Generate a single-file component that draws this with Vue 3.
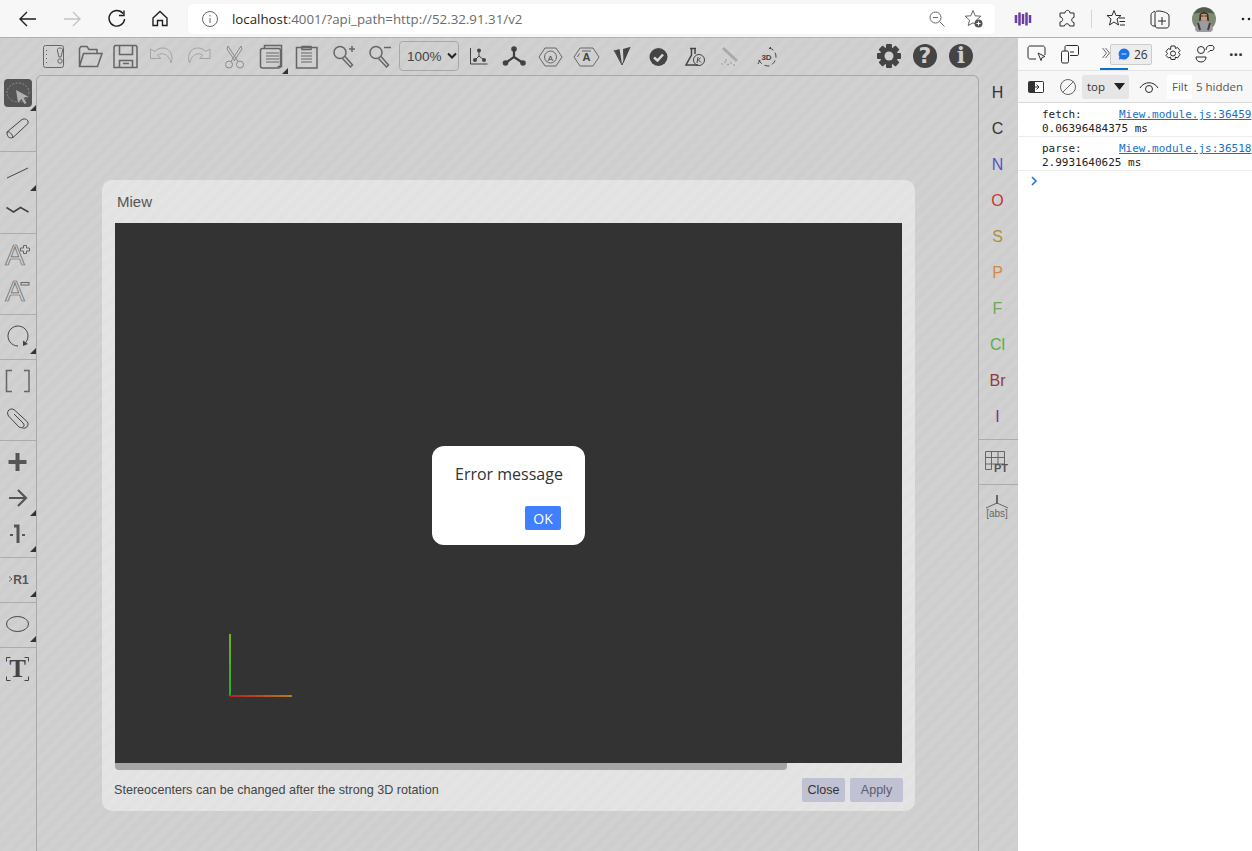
<template>
  <div class="page">
    <!-- browser bar -->
    <header class="browser">
      <div class="nav">
        <span class="nav-btn"><svg width="44" height="38" viewBox="0 0 44 38"><path class="b-line" d="M30 19H14M21 12l-7 7 7 7" /></svg></span>
        <span class="nav-btn"><svg width="44" height="38" viewBox="0 0 44 38"><path class="b-line off" d="M14 19h16M23 12l7 7-7 7" /></svg></span>
        <span class="nav-btn"><svg width="44" height="38" viewBox="0 0 44 38"><path class="b-line" d="M29 13.500a7.800 7.800 0 1 0 1.600 5.500M30 10.500v5h-5" /></svg></span>
        <span class="nav-btn"><svg width="44" height="38" viewBox="0 0 44 38"><path class="b-line" d="M15 18l7-6.500 7 6.500v7.500h-4.500v-5h-5v5H15z" /></svg></span>
      </div>
      <div class="url">
        <svg class="url-info" width="18" height="18" viewBox="0 0 18 18">
          <circle cx="9" cy="9" r="7.500" class="b-thin" />
          <path class="b-thin" d="M9 8v5M9 5v1.500" />
        </svg>
        <span class="url-text"><span class="host">localhost</span>:4001/?api_path=http://52.32.91.31/v2</span>
        <svg class="url-zoom" width="18" height="18" viewBox="0 0 18 18">
          <circle cx="7.500" cy="7.500" r="5.500" class="b-thin" />
          <path class="b-thin" d="M5 7.500h5M11.500 11.500l5 5" />
        </svg>
        <svg class="url-star" width="20" height="20" viewBox="0 0 20 20">
          <path class="b-thin" d="M9 1.500l2.200 5.300 5.600.4-4.300 3.700 1.300 5.500L9 13.800l-4.800 2.800 1.300-5.500L1.200 7.200l5.600-.4z" />
          <circle cx="14.500" cy="14.500" r="4" fill="#555" />
          <path d="M12.500 14.500h4M14.500 12.500v4" stroke="#fff" stroke-width="1" />
        </svg>
      </div>
      <div class="ext">
        <span class="ext-btn"><svg width="20" height="20" viewBox="0 0 20 20"><path d="M3 6v8M6.500 3.500v13M10 5v10M13.500 3.500v13M17 6v8" stroke="#6a3f9e" stroke-width="2.500" /></svg></span>
        <span class="ext-btn"><svg width="20" height="20" viewBox="0 0 20 20"><path class="b-thin dark" d="M8 4c0-3.500 5-3.500 5 0h4v4.500c-3 0-3 5 0 5V17h-4.500c0-3-5-3-5 0H3v-4c3.500 0 3.500-5 0-5V4z" /></svg></span>
        <span class="ext-sep"></span>
        <span class="ext-btn"><svg width="20" height="20" viewBox="0 0 20 20"><path class="b-thin dark" d="M8 1.500l2 5H15l-4 3.500 1.500 6-4.500-3-4.500 3L5 10 1 6.500h5zM13 9h6M13.500 12.500h5.500M14 16h5" /></svg></span>
        <span class="ext-btn"><svg width="22" height="22" viewBox="0 0 22 22"><path class="b-thin dark" d="M6 3L3.500 4.500C2 5.500 2 6 2 8v7c0 2 1 3 3 3h2" /><path class="b-thin dark" d="M9 3c-2 0-3 1-3 3v11c0 2 1 3 3 3h8c2 0 3-1 3-3V8c0-3-6-5-11-5z" /><path class="b-thin dark" d="M13 9v8M9 13h8" /></svg></span>
        <span class="ext-btn">
          <svg width="26" height="26" viewBox="0 0 26 26">
            <circle cx="13" cy="13" r="12" fill="#7f8a72" />
            <path d="M3 8a11 11 0 0 1 20 0c-5-2-15-2-20 0z" fill="#4f5a4a" />
            <path d="M4 24c1-7 4-9 9-9s8 2 9 9a12 12 0 0 1-18 0z" fill="#9a9ca4" />
            <path d="M7 17l2 7M19 17l-2 7" stroke="#4a3540" stroke-width="2" />
            <circle cx="13" cy="10.500" r="4.200" fill="#c89a80" />
            <path d="M8.500 9c1-4 8-4 9 0l.5 6-2-1V8.500c-2-1-4-1-6 0V14l-2 1z" fill="#3d3028" />
            <path d="M10 10h2.500M13.500 10H16" stroke="#332" stroke-width="1" />
          </svg>
        </span>
        <span class="ext-btn"><svg width="44" height="38" viewBox="0 0 44 38"><circle cx="17" cy="19" r="1.300" fill="#222" /><circle cx="23" cy="19" r="1.300" fill="#222" /></svg></span>
      </div>
    </header>

    <main class="main">
      <!-- ketcher editor -->
      <section class="app">
        <div class="top-bar">
          <div class="tools">
            <span class="tool">
              <svg viewBox="0 0 36 36"><rect x="7.500" y="7.500" width="20" height="22" rx="2" class="s" /><path class="s" d="M10.500 12v1M10.500 16v1M10.500 20v1M10.500 24v1" /><path d="M24 10c2 0 3 1 2.500 3L25 19h-2l-1.500-6c-.5-2 .5-3 2.500-3z" class="s" /><circle cx="24" cy="23" r="2.200" class="s" /></svg>
            </span>
            <span class="tool">
              <svg viewBox="0 0 36 36"><path class="s w" d="M7.500 28.500v-18l1.500-2h6l2 3h8v4M7.500 28.500l4-13h18.500l-4.500 13z" /></svg>
            </span>
            <span class="tool">
              <svg viewBox="0 0 36 36"><path class="s w" d="M8.500 7.500h21l1 1.500v20.500h-23V9z" transform="translate(-1.500 0)" /><path class="s w" d="M11.500 7.500v9h13v-9M11.500 29.500v-7h13v7M15 25.500h6" /></svg>
            </span>
            <span class="tool">
              <svg viewBox="0 0 36 36"><path class="s l" d="M6.500 11v9.500H17l-3.500-3c4.500-3.500 11-2 13.500 7.500 3-7-1-15-8-15-3 0-6 1-8 3.500z" /></svg>
            </span>
            <span class="tool">
              <svg viewBox="0 0 36 36"><path class="s l" d="M30 11v9.500H19.500l3.500-3c-4.500-3.500-11-2-13.500 7.500-3-7 1-15 8-15 3 0 6 1 8 3.500z" /></svg>
            </span>
            <span class="tool">
              <svg viewBox="0 0 36 36"><circle cx="13" cy="26.500" r="3.500" class="s m" /><circle cx="24" cy="26.500" r="3.500" class="s m" /><path class="s m" d="M15 23.500L25 8l1 3-8 12M22 23.500L12 8l-1 3 8 12" /></svg>
            </span>
            <span class="tool menu">
              <svg viewBox="0 0 36 36"><path class="s w" d="M12.500 10.500V7.500h17v21h-4" /><rect x="8.500" y="10.500" width="20" height="19.500" rx="2" class="s w" fill="#cfcfcf" /><path class="s" d="M14 15h13M14 18h13M14 21h13M14 24h13" /></svg>
            </span>
            <span class="tool">
              <svg viewBox="0 0 36 36"><path class="s w" d="M8.500 9.500h20.500v20.500H8.500zM14 8.500h9v3h-9z" /><path class="s" d="M13 15h11M13 18h11M13 21h11M13 24h11" /></svg>
            </span>
            <span class="tool zoom">
              <svg viewBox="0 0 36 36"><circle cx="15" cy="14.500" r="6" class="s w" /><path class="s w" d="M20 18.500l7.500 8.500-2 2-8-8.500" /><path class="s w" d="M24 11h6M27 8v6" /></svg>
            </span>
            <span class="tool zoom">
              <svg viewBox="0 0 36 36"><circle cx="15" cy="14.500" r="6" class="s w" /><path class="s w" d="M20 18.500l7.500 8.500-2 2-8-8.500" /><path class="s w" d="M23 9.500h7" /></svg>
            </span>
          </div>
          <div class="zoom-select">
            <span>100%</span>
            <svg width="10" height="8" viewBox="0 0 10 8"><path d="M1 1.500l4 4 4-4" fill="none" stroke="#222" stroke-width="2" /></svg>
          </div>
          <div class="tools">
            <span class="tool">
              <svg viewBox="0 0 36 36"><path class="s k" stroke-width="1.500" d="M10.500 10v16h17" /><circle cx="19" cy="12.500" r="2" class="f" /><circle cx="15" cy="22" r="2" class="f" /><circle cx="24" cy="22" r="2" class="f" /><path class="s k" d="M19 12.500V18l-4 4M19 18l5 4" /></svg>
            </span>
            <span class="tool">
              <svg viewBox="0 0 36 36"><circle cx="18" cy="11" r="2.800" class="f" /><circle cx="9.500" cy="25" r="2.800" class="f" /><circle cx="27" cy="25" r="2.800" class="f" /><path d="M18 11v8l-8.500 6M18 19l9 6" fill="none" stroke="#3d3d3d" stroke-width="2.200" /></svg>
            </span>
            <span class="tool">
              <svg viewBox="0 0 36 36"><path class="s" d="M7 19l6-9h11l6 9-6 9H13z" /><circle cx="18.500" cy="19" r="6" class="s" /><text x="18.500" y="22.500" class="tiny">A</text></svg>
            </span>
            <span class="tool">
              <svg viewBox="0 0 36 36"><path class="s" d="M6 19l6-9h13l6 9-6 9H12zM11.500 15.500l-2 3.500M14 13h9" /><text x="18.500" y="23" class="tiny big">A</text></svg>
            </span>
            <span class="tool">
              <svg viewBox="0 0 36 36"><path class="f" d="M10.500 12.500l5-1.500 2.500 15zM19 11l7-2-6.500 16z" /><path class="s k" d="M10 12l8 15 8-18" /></svg>
            </span>
            <span class="tool">
              <svg viewBox="0 0 36 36"><circle cx="18.500" cy="19" r="9" class="f" /><path d="M14 19.500l3.500 3 5.500-6" fill="none" stroke="#d8d8d8" stroke-width="2.500" /></svg>
            </span>
            <span class="tool">
              <svg viewBox="0 0 36 36"><path class="s k w" d="M14 10.500h6M15.500 11v6L10 27h12M19 11v5" /><circle cx="23" cy="22" r="5.500" class="s k" /><path class="s k" d="M22 19l-1 6M24.500 19.500l-2 2.500 2.500 2.500" /></svg>
            </span>
            <span class="tool">
              <svg viewBox="0 0 36 36"><path d="M10 11l2-2 14 13-2 2z" fill="#a9a9a9" /><path d="M10 26h.1M13 24h.1M16 26.500h.1M19 25h.1M22 27h.1M14 22h.1" stroke="#8f8f8f" stroke-width="1.500" stroke-linecap="round" /></svg>
            </span>
            <span class="tool">
              <svg viewBox="0 0 36 36"><path class="s k" stroke-dasharray="5 3" d="M21 10c5 1 7 5 7 9s-4 9-8 9-10-4-10-9" /><path class="s k" d="M12 22l-2 4M23 9l-2 2" /><text x="18.500" y="21.500" class="tiny d3">3D</text></svg>
            </span>
          </div>
          <div class="tools help">
            <span class="tool">
              <svg viewBox="0 0 36 36">
                <g fill="#444">
                  <circle cx="18" cy="18" r="9" />
                  <rect x="15" y="6" width="6" height="24" rx="1" />
                  <rect x="15" y="6" width="6" height="24" rx="1" transform="rotate(45 18 18)" />
                  <rect x="15" y="6" width="6" height="24" rx="1" transform="rotate(90 18 18)" />
                  <rect x="15" y="6" width="6" height="24" rx="1" transform="rotate(135 18 18)" />
                </g>
                <circle cx="18" cy="18" r="4.500" fill="#cfcfcf" />
              </svg>
            </span>
            <span class="tool">
              <svg viewBox="0 0 36 36"><circle cx="18" cy="18" r="12" fill="#444" /><text x="18" y="25" class="glyph">?</text></svg>
            </span>
            <span class="tool">
              <svg viewBox="0 0 36 36"><circle cx="18" cy="18" r="12" fill="#444" /><text x="18" y="25" class="glyph serif">i</text></svg>
            </span>
          </div>
        </div>

        <div class="workspace">
          <aside class="left-bar">
            <div class="group">
              <span class="tool menu active">
                <svg viewBox="4 4 28 28"><ellipse cx="18" cy="17.500" rx="11" ry="9.500" fill="none" stroke="#8f8f8f" stroke-dasharray="2 1.500" /><path d="M16 15l12 6.500-4.500 1.500 3 5-2 1-3-5-3.500 3.500z" fill="#b0b0b0" /></svg>
              </span>
              <span class="tool">
                <svg viewBox="0 0 36 36"><path class="s k" d="M7 21L22 8.500c3-1.500 7 0 6 4L13 26.500c-3 1-6 .5-6-5.500zM7 21c2-1 5 1.500 6 5.500" /></svg>
              </span>
            </div>
            <div class="group">
              <span class="tool menu">
                <svg viewBox="0 0 36 36"><path class="s k" d="M7 23l21-10" /></svg>
              </span>
              <span class="tool">
                <svg viewBox="0 0 36 36"><path class="s k w" d="M6.500 16.500l7 4.500 7-4.500 8 4.500" /></svg>
              </span>
            </div>
            <div class="group">
              <span class="tool">
                <svg viewBox="0 0 36 36"><text x="15" y="28" class="atom-text">A</text><path class="s" d="M23.500 8.500h3V11h3v3h-3v2.500h-3V14h-3v-3h3z" /></svg>
              </span>
              <span class="tool">
                <svg viewBox="0 0 36 36"><text x="15" y="28" class="atom-text">A</text><rect x="21" y="9.500" width="8" height="2.500" class="s" /></svg>
              </span>
            </div>
            <div class="group">
              <span class="tool menu">
                <svg viewBox="0 0 36 36"><path class="s k" d="M24 26a10 10 0 1 0-6 2" /><path class="f" d="M23 22.500l5 3.500-5 2z" /></svg>
              </span>
            </div>
            <div class="group">
              <span class="tool">
                <svg viewBox="0 0 36 36"><path class="s w" d="M12 7.500H6.500v21H12M24 7.500h5v21h-5" /></svg>
              </span>
              <span class="tool">
                <svg viewBox="0 0 36 36"><path class="s k" stroke-width="1.800" d="M14 15l9 9c3 3-1 6-4 4L8.500 17c-3-5 2-9 6-6l13 12c2 4-2 7-5 6" /></svg>
              </span>
            </div>
            <div class="group">
              <span class="tool">
                <svg viewBox="0 0 36 36"><path d="M17.500 9v18M8.500 18h18" fill="none" stroke="#555" stroke-width="4" /></svg>
              </span>
              <span class="tool menu">
                <svg viewBox="0 0 36 36"><path d="M9 18h16M18 10l8 8-8 8" fill="none" stroke="#555" stroke-width="2.200" /></svg>
              </span>
              <span class="tool menu">
                <svg viewBox="0 0 36 36"><path d="M14 10h4v17" fill="none" stroke="#555" stroke-width="3" /><path d="M10 19h3M22 19h3" stroke="#555" stroke-width="2" /></svg>
              </span>
            </div>
            <div class="group">
              <span class="tool menu">
                <svg viewBox="0 0 36 36"><path class="s" d="M9 15.500l3 2.500-3 2.500" /><text x="21" y="22.500" class="r1">R1</text></svg>
              </span>
            </div>
            <div class="group">
              <span class="tool menu">
                <svg viewBox="0 0 36 36"><ellipse cx="17.500" cy="18" rx="11" ry="7.500" class="s k" /></svg>
              </span>
            </div>
            <div class="group last">
              <span class="tool">
                <svg viewBox="0 0 36 36"><path class="s k" d="M6.500 10.500v-4h4M24.500 6.500h4v4M6.500 25.500v4h4M24.500 29.500h4v-4" /><text x="17.500" y="26" class="t-glyph">T</text></svg>
              </span>
            </div>
          </aside>

          <div class="canvas-frame"></div>

          <aside class="right-bar">
            <div class="atoms">
              <span v-for="a in atoms" :key="a.label" class="atom" :style="{ color: a.color }">{{ a.label }}</span>
            </div>
            <div class="right-group">
              <span class="tool wide">
                <svg viewBox="0 0 39 44"><path class="s" d="M6.500 11.500h19v12.500h-13v5.500h-6zM6.500 17.500h19M6.500 24h6M12.500 11.500V24M19 11.500V24" /><text x="15" y="32" class="pt">PT</text></svg>
              </span>
            </div>
            <div class="right-group bare">
              <span class="tool wide">
                <svg viewBox="0 0 39 44"><path class="s k w" d="M18 10v9" /><path class="s" d="M7 23l11-5 11 5" /><text x="18" y="32" class="abs">[abs]</text></svg>
              </span>
            </div>
          </aside>
        </div>

        <!-- miew dialog -->
        <div class="miew">
          <div class="miew-title">Miew</div>
          <div class="viewer">
            <div class="axis axis-y"></div>
            <div class="axis axis-x"></div>
            <div class="error-box">
              <div class="error-text">Error message</div>
              <div class="error-actions"><span class="ok">OK</span></div>
            </div>
          </div>
          <div class="scroll-track"><div class="scroll-thumb"></div></div>
          <div class="miew-foot">
            <span class="miew-hint">Stereocenters can be changed after the strong 3D rotation</span>
            <div class="miew-btns">
              <span class="mbtn close">Close</span>
              <span class="mbtn apply">Apply</span>
            </div>
          </div>
        </div>
      </section>

      <!-- devtools -->
      <section class="devtools">
        <div class="dt-tabs">
          <svg width="20" height="20" viewBox="0 0 20 20" class="dt-ic a"><path class="b-thin dark" d="M9 15H3c-1 0-2-1-2-2V4c0-1 1-2 2-2h13c1 0 2 1 2 2v7" /><path d="M11 9l7 3.500-3 1-1 3z" fill="#f9f9f9" stroke="#333" /></svg>
          <svg width="20" height="20" viewBox="0 0 20 20" class="dt-ic b"><rect x="1.500" y="7" width="7" height="12" rx="1.500" class="b-thin dark" /><path class="b-thin dark" d="M5 7V3c0-1 .5-1.500 1.500-1.500H17c1 0 1.500.5 1.500 1.500v7c0 1-.5 1.500-1.500 1.500h-7M10 8h4" /></svg>
          <svg class="dt-more" width="8" height="12" viewBox="0 0 8 12"><path d="M.5 1l4 5-4 5M3.500 1l4 5-4 5" fill="none" stroke="#666" /></svg>
          <span class="dt-badge">
            <svg width="12" height="12" viewBox="0 0 12 12"><path d="M6 .5a5.500 5.500 0 1 1-2.500 10.400L.8 11.500l.6-2.700A5.500 5.500 0 0 1 6 .5z" fill="#1a73e8" /><path d="M3.500 6h5" stroke="#cfe2ff" /></svg>
            <span>26</span>
          </span>
          <svg width="20" height="20" viewBox="0 0 20 20" class="dt-ic c"><path class="b-thin dark" d="M8 1.500h4l.5 2.500 2-1 2.500 3-1.500 2 1.500 2-2.500 3.500-2-1-.5 2.500H8l-.5-2.500-2 1L3 11l1.500-2L3 7l2.500-3 2 1z" transform="translate(0 .5)" /><circle cx="10" cy="9.500" r="2.500" class="b-thin dark" /></svg>
          <svg width="20" height="20" viewBox="0 0 20 20" class="dt-ic d"><circle cx="6" cy="6" r="3.500" class="b-thin dark" /><path class="b-thin dark" d="M1 13h10c0 3-2 5-5 5s-5-2-5-5zM11 6c0-3 2-4.500 4-4.500h2c1 0 2 1 2 2.500s-1 2.500-2 2.500h-2l-2 2" /></svg>
          <span class="dt-dots">···</span>
        </div>
        <div class="dt-filter">
          <svg width="18" height="18" viewBox="0 0 18 18" class="ft-a"><rect x="1" y="3" width="16" height="12" rx="2" fill="#333" /><rect x="8" y="4" width="8" height="10" fill="#fff" /><path d="M5 9h7M9.500 6.500L12 9l-2.500 2.500" stroke="#333" fill="none" /></svg>
          <svg width="18" height="18" viewBox="0 0 18 18" class="ft-b"><circle cx="9" cy="9" r="7.500" class="b-thin" /><path class="b-thin" d="M3.500 14.500l11-11" /></svg>
          <span class="ctx">top<svg width="11" height="8" viewBox="0 0 11 8"><path d="M0 0h11L5.500 7z" fill="#222" /></svg></span>
          <svg width="20" height="14" viewBox="0 0 20 14" class="ft-c"><path class="b-thin dark" d="M1 8c4-7 14-7 18 0" /><circle cx="10" cy="9" r="3.500" class="b-thin dark" /></svg>
          <span class="filter-box">Filt</span>
          <span class="hidden-count">5 hidden</span>
        </div>
        <div class="log">
          <div class="log-row">
            <div class="log-head"><span>fetch:</span><a class="src">Miew.module.js:36459</a></div>
            <div>0.06396484375 ms</div>
          </div>
          <div class="log-row">
            <div class="log-head"><span>parse:</span><a class="src">Miew.module.js:36518</a></div>
            <div>2.9931640625 ms</div>
          </div>
          <svg class="prompt" width="8" height="10" viewBox="0 0 8 10"><path d="M2 1l4 4-4 4" fill="none" stroke="#1a73e8" stroke-width="1.600" /></svg>
        </div>
      </section>
    </main>
  </div>
</template>

<script setup>
const atoms = [
  { label: 'H', color: '#333' },
  { label: 'C', color: '#333' },
  { label: 'N', color: '#5555c8' },
  { label: 'O', color: '#c93434' },
  { label: 'S', color: '#ab9040' },
  { label: 'P', color: '#d28a45' },
  { label: 'F', color: '#6fa85c' },
  { label: 'Cl', color: '#55b045' },
  { label: 'Br', color: '#943a3a' },
  { label: 'I', color: '#843084' }
]
</script>

<style>
html, body {
  margin: 0;
  height: 100%;
  overflow: hidden;
}
</style>

<style scoped>
.page {
  width: 1252px;
  height: 851px;
  display: flex;
  flex-direction: column;
  overflow: hidden;
  font-family: "Liberation Sans", Arial, sans-serif;
}

/* browser bar */
.browser {
  height: 38px;
  flex: none;
  display: flex;
  align-items: center;
  background: #f7f7f7;
  border-bottom: 1px solid #b0b0b0;
  box-sizing: border-box;
  padding-left: 6px;
}
.nav {
  display: flex;
  flex: none;
}
.nav-btn {
  width: 44px;
  height: 38px;
}
.nav-btn svg {
  display: block;
}
.b-line {
  fill: none;
  stroke: #1f1f1f;
  stroke-width: 1.400;
}
.b-line.off {
  stroke: #c4c4c4;
}
.b-thin {
  fill: none;
  stroke: #666;
  stroke-width: 1;
}
.b-thin.dark {
  stroke: #2b2b2b;
}
.url {
  width: 807px;
  height: 30px;
  flex: none;
  margin-left: 6px;
  background: #fff;
  border-radius: 4px;
  display: flex;
  align-items: center;
  box-shadow: 0 0 1px rgba(0, 0, 0, 0.1);
}
.url-info {
  margin-left: 13px;
}
.url-text {
  margin-left: 13px;
  font-family: "Open Sans", sans-serif;
  font-size: 13.300px;
  color: #6b6b6b;
  white-space: nowrap;
}
.host {
  color: #1f1f1f;
}
.url-zoom {
  margin-left: auto;
}
.url-star {
  margin-left: 18px;
  margin-right: 11px;
}
.ext {
  display: flex;
  flex: none;
  align-items: center;
  margin-left: 6px;
}
.ext-btn {
  width: 44px;
  height: 38px;
  flex: none;
  display: flex;
  align-items: center;
  justify-content: center;
}
.ext-sep {
  width: 1px;
  height: 18px;
  background: #d5d5d5;
  margin: 0 2px;
}

.main {
  flex: 1;
  display: flex;
  min-height: 0;
}

/* editor */
.app {
  position: relative;
  width: 1018px;
  flex: none;
  display: flex;
  flex-direction: column;
  background: repeating-linear-gradient(135deg, #cecece 0 5px, #d1d1d1 5px 10px);
}
.top-bar {
  height: 37px;
  flex: none;
  display: flex;
  padding-left: 36px;
}
.tools {
  display: flex;
}
.help {
  margin-left: auto;
  margin-right: 39px;
}
.tool {
  position: relative;
  width: 36px;
  height: 36px;
  display: block;
  flex: none;
}
.tool svg {
  display: block;
  width: 100%;
  height: 100%;
}
.tool.zoom {
  left: 1px;
}
.tool.menu::after {
  content: "";
  position: absolute;
  right: 0;
  bottom: 0;
  border-left: 6px solid transparent;
  border-bottom: 6px solid #333;
}
.tool.active {
  display: flex;
  align-items: center;
  justify-content: center;
}
.tool.active svg {
  background: #555;
  border-radius: 4px;
  width: 28px;
  height: 28px;
}
.tool.wide {
  width: 39px;
  height: 44px;
}
.s {
  fill: none;
  stroke: #666;
  stroke-width: 1;
}
.s.w {
  stroke-width: 1.500;
}
.s.l {
  stroke: #a3a3a3;
}
.s.m {
  stroke: #8a8a8a;
}
.s.k {
  stroke: #444;
}
.f {
  fill: #444;
}
.tiny {
  font-size: 8px;
  fill: #444;
  text-anchor: middle;
}
.tiny.big {
  font-size: 11px;
  font-weight: 700;
}
.tiny.d3 {
  font-size: 8px;
  font-weight: 700;
}
.glyph {
  font-size: 22px;
  font-weight: 700;
  fill: #cfcfcf;
  text-anchor: middle;
  font-family: "DejaVu Sans", sans-serif;
}
.glyph.serif {
  font-family: "DejaVu Serif", serif;
}
.atom-text {
  font-size: 29px;
  fill: #d2d2d2;
  stroke: #666;
  stroke-width: 0.700;
  text-anchor: middle;
}
.r1 {
  font-size: 12px;
  font-weight: 700;
  fill: #555;
  text-anchor: middle;
}
.t-glyph {
  font-family: "Liberation Serif", serif;
  font-size: 25px;
  font-weight: 700;
  fill: #444;
  text-anchor: middle;
}
.pt {
  font-size: 11px;
  font-weight: 700;
  fill: #555;
}
.abs {
  font-size: 10px;
  fill: #666;
  text-anchor: middle;
}
.zoom-select {
  width: 60px;
  height: 30px;
  box-sizing: border-box;
  margin: 3px 1px 0 3px;
  border: 1px solid #a8a8a8;
  border-radius: 4px;
  display: flex;
  align-items: center;
  gap: 5px;
  padding-left: 7px;
  font-size: 13.500px;
  color: #444;
}
.workspace {
  flex: 1;
  display: flex;
  min-height: 0;
}
.left-bar {
  width: 36px;
  flex: none;
}
.group {
  padding: 3px 0 5px;
  border-bottom: 1px solid #acacac;
}
.group:first-child {
  padding: 0 0 4px;
}
.group:nth-child(2) {
  padding-bottom: 6px;
}
.group.last {
  border-bottom: 0;
}
.canvas-frame {
  flex: 1;
  border: 1px solid #a8a8a8;
  border-bottom: 0;
  border-radius: 6px 6px 0 0;
}
.right-bar {
  width: 39px;
  flex: none;
}
.atoms {
  display: flex;
  flex-direction: column;
  padding-bottom: 4px;
  border-bottom: 1px solid #acacac;
}
.atom {
  height: 36px;
  line-height: 36px;
  text-align: center;
  font-size: 16px;
  padding-right: 2px;
}
.right-group {
  border-bottom: 1px solid #acacac;
}
.right-group.bare {
  border-bottom: 0;
}

/* dialog over the editor */
.miew {
  position: absolute;
  left: 102px;
  top: 142px;
  width: 813px;
  height: 631px;
  box-sizing: border-box;
  padding: 0 13px;
  border-radius: 10px;
  display: flex;
  flex-direction: column;
  background: repeating-linear-gradient(135deg, #e2e2e2 0 5px, #e4e4e4 5px 10px);
}
.miew-title {
  height: 43px;
  line-height: 43px;
  padding-left: 2px;
  font-size: 15px;
  color: #555;
  flex: none;
}
.viewer {
  position: relative;
  height: 540px;
  flex: none;
  background: #333;
  display: flex;
  align-items: center;
  justify-content: center;
}
.axis {
  position: absolute;
}
.axis-y {
  left: 114px;
  top: 411px;
  width: 2px;
  height: 62px;
  background: linear-gradient(#7aae22, #1db31d);
}
.axis-x {
  left: 115px;
  top: 472px;
  width: 62px;
  height: 2px;
  background: linear-gradient(90deg, #b8201f, #b87a22);
}
.error-box {
  position: relative;
  top: 2.500px;
  width: 153px;
  height: 99px;
  box-sizing: border-box;
  padding: 16px 24px 0 23px;
  background: #fff;
  border-radius: 12px;
}
.error-text {
  font-family: "Open Sans", sans-serif;
  font-size: 16px;
  line-height: 24px;
  color: #333;
  white-space: nowrap;
}
.error-actions {
  display: flex;
  justify-content: flex-end;
  margin-top: 20px;
}
.ok {
  width: 36px;
  height: 24px;
  line-height: 25px;
  text-align: center;
  background: #4080ff;
  border-radius: 2px;
  color: #fff;
  font-family: "Open Sans", sans-serif;
  font-size: 14px;
}
.scroll-track {
  height: 7px;
  flex: none;
}
.scroll-thumb {
  width: 672px;
  height: 7px;
  background: #a5a5a5;
  border-radius: 0 0 4px 4px;
}
.miew-foot {
  flex: 1;
  display: flex;
  align-items: flex-start;
  justify-content: space-between;
  margin-right: -1px;
  padding-top: 8px;
}
.miew-hint {
  font-size: 12.600px;
  line-height: 25px;
  color: #444;
  margin-left: -1px;
}
.miew-btns {
  display: flex;
  gap: 5px;
}
.mbtn {
  height: 24px;
  line-height: 24px;
  text-align: center;
  font-size: 12.500px;
  background: #c0c1d2;
  border-radius: 2px;
}
.close {
  width: 43px;
  color: #333;
}
.apply {
  width: 53px;
  color: #5c5c6e;
}

/* devtools */
.devtools {
  flex: 1;
  min-width: 0;
  background: #fff;
  overflow: hidden;
  font-family: "Open Sans", sans-serif;
}
.dt-tabs {
  position: relative;
  height: 33px;
  box-sizing: border-box;
  display: flex;
  align-items: center;
  background: #f9f9f9;
  border-bottom: 1px solid #e4e4e4;
}
.dt-ic.a {
  margin-left: 9px;
}
.dt-ic.b {
  margin-left: 13px;
}
.dt-more {
  margin-left: 22px;
  margin-top: -3px;
  flex: none;
}
.dt-badge {
  position: relative;
  height: 21px;
  width: 42px;
  box-sizing: border-box;
  padding-left: 7px;
  display: flex;
  align-items: center;
  gap: 4px;
  font-size: 12px;
  color: #333;
  background: #ededed;
  border: 1px solid #ccc;
  border-radius: 2px;
}
.dt-tabs::after {
  content: "";
  position: absolute;
  left: 82px;
  bottom: 0;
  width: 28px;
  height: 2px;
  background: #0a6fd1;
}
.dt-ic.c {
  margin-left: 11px;
}
.dt-ic.d {
  margin-left: 12px;
}
.dt-dots {
  margin-left: 14px;
  font-size: 16px;
  font-weight: 700;
  color: #333;
}
.dt-filter {
  height: 32px;
  box-sizing: border-box;
  display: flex;
  align-items: center;
  background: #f7f7f7;
  border-bottom: 1px solid #d8d8d8;
  font-size: 11.500px;
  color: #555;
}
.ft-a {
  margin-left: 9px;
}
.ft-b {
  margin-left: 14px;
}
.ctx {
  height: 24px;
  width: 47px;
  box-sizing: border-box;
  margin-left: 5px;
  padding-left: 5px;
  display: flex;
  align-items: center;
  gap: 9px;
  background: #e6e6e6;
  border-radius: 2px;
  color: #333;
}
.ft-c {
  margin-left: 10px;
}
.filter-box {
  height: 24px;
  line-height: 24px;
  margin-left: 8px;
  padding-left: 5px;
  background: #fff;
  border-radius: 2px 0 0 2px;
  overflow: hidden;
  flex: none;
  width: 20px;
}
.hidden-count {
  margin-left: 4px;
  white-space: nowrap;
}
.log {
  position: relative;
  font-family: "DejaVu Sans Mono", monospace;
  font-size: 11px;
  line-height: 14px;
  color: #222;
}
.log-row {
  padding: 5px 0 0 24px;
  border-bottom: 1px solid #ececec;
  white-space: nowrap;
}
.log-head {
  display: flex;
}
.log-head span {
  width: 77px;
  flex: none;
}
.src {
  color: #1a6fc4;
  text-decoration: underline;
}
.prompt {
  position: absolute;
  left: 12px;
  top: 73px;
}
</style>
